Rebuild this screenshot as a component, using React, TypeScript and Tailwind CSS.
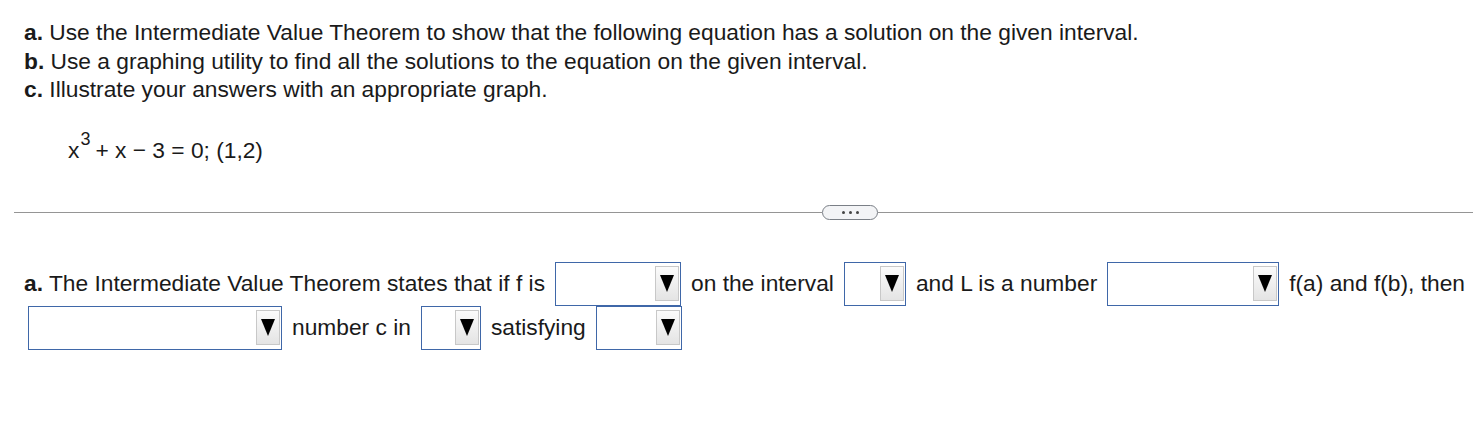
import React from "react";

function Drop({ w }: { w: string }) {
  return (
    <div className={`${w} h-[44px] shrink-0 border border-[#3f67a8] bg-white flex items-center justify-end pr-[1px]`}>
      <div className="w-[24px] h-[35px] border border-[#c8c8c8] bg-gradient-to-b from-[#fbfbfb] to-[#e4e4e4] flex items-center justify-center">
        <svg width="14" height="17" viewBox="0 0 14 17">
          <polygon points="0,0 14,0 7,17" fill="#000" />
        </svg>
      </div>
    </div>
  );
}

export default function App() {
  return (
    <div className="w-[1474px] h-[425px] bg-white text-[#1a1a1a] text-[22.75px]" style={{ fontFamily: '"Liberation Sans", Arial, sans-serif' }}>
      <div className="pt-[18px] pl-[24px] leading-[28.5px]">
        <div className="whitespace-nowrap"><span className="font-bold">a.</span> Use the Intermediate Value Theorem to show that the following equation has a solution on the given interval.</div>
        <div className="whitespace-nowrap"><span className="font-bold">b.</span> Use a graphing utility to find all the solutions to the equation on the given interval.</div>
        <div className="whitespace-nowrap"><span className="font-bold">c.</span> Illustrate your answers with an appropriate graph.</div>
      </div>
      <div className="mt-[32px] pl-[68px] leading-[28px] whitespace-nowrap">
        x<span className="text-[18px] relative -top-[13px] ml-[1px] mr-[5px]">3</span>+ x − 3 = 0; (1,2)
      </div>
      <div className="mt-[39px] flex items-center pl-[14px]">
        <div className="w-[808px] h-[1px] bg-[#959595]" />
        <div className="w-[56px] h-[15px] rounded-full border border-[#7a7f86] bg-[#f3f4f6] flex items-center justify-center gap-[4px]">
          <span className="w-[3px] h-[3px] rounded-full bg-[#444]" />
          <span className="w-[3px] h-[3px] rounded-full bg-[#444]" />
          <span className="w-[3px] h-[3px] rounded-full bg-[#444]" />
        </div>
        <div className="flex-1 h-[1px] bg-[#959595] mr-[1px]" />
      </div>
      <div className="mt-[42px]">
        <div className="flex items-center gap-[10px] pl-[24px]">
          <span className="whitespace-nowrap"><span className="font-bold">a.</span> The Intermediate Value Theorem states that if f is</span>
          <Drop w="w-[126px]" />
          <span className="whitespace-nowrap">on the interval</span>
          <Drop w="w-[62px]" />
          <span className="whitespace-nowrap">and L is a number</span>
          <Drop w="w-[172px]" />
          <span className="whitespace-nowrap">f(a) and f(b), then</span>
        </div>
        <div className="flex items-center gap-[10px] pl-[28px]">
          <Drop w="w-[254px]" />
          <span className="whitespace-nowrap">number c in</span>
          <Drop w="w-[60px]" />
          <span className="whitespace-nowrap">satisfying</span>
          <Drop w="w-[86px]" />
        </div>
      </div>
    </div>
  );
}
